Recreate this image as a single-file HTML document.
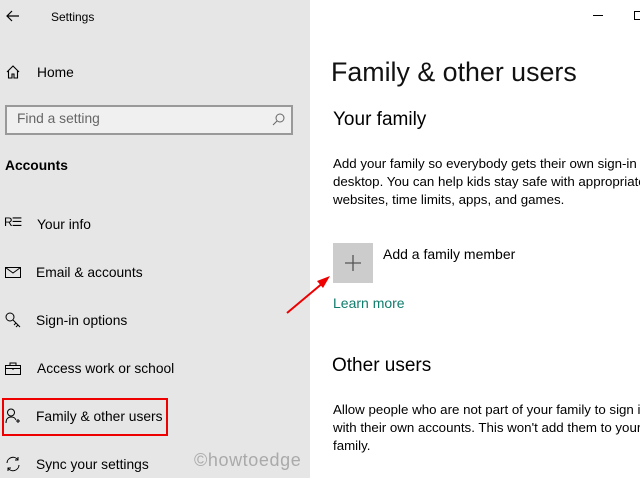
<!DOCTYPE html>
<html><head><meta charset="utf-8"><style>
*{margin:0;padding:0;box-sizing:border-box}
body{width:640px;height:478px;overflow:hidden;font-family:"Liberation Sans",sans-serif;background:#fff;position:relative;color:#000}
.side{position:absolute;left:0;top:0;width:310px;height:478px;background:#e6e6e6}
.t{position:absolute;white-space:nowrap}
.s{font-size:14px}
.side .s{font-size:13.8px}
svg{position:absolute}
</style></head><body>
<div class="side">
<svg style="left:6px;top:10px" width="14" height="12" viewBox="0 0 14 12"><path d="M13 6H1M6 1L1 6l5 5" fill="none" stroke="#000" stroke-width="1.2"/></svg>
<div class="t" style="left:51px;top:10px;font-size:12px">Settings</div>
<svg style="left:6px;top:65px" width="14" height="14" viewBox="0 0 14 14"><path d="M1 7L7 1l6 6M2.5 6v7h3.5V9h2v4h3.5V6" fill="none" stroke="#000" stroke-width="1.1"/></svg>
<div class="t s" style="left:37px;top:65px">Home</div>
<div style="position:absolute;left:5px;top:105px;width:288px;height:30px;border:2px solid #999;background:#f0f0f0"></div>
<div class="t s" style="left:17px;top:111px;color:#666">Find a setting</div>
<svg style="left:272px;top:113px" width="13" height="13" viewBox="0 0 13 13"><circle cx="8" cy="5" r="4" fill="none" stroke="#666"/><path d="M5 8L1 12" stroke="#666"/></svg>
<div class="t s" style="left:5px;top:158px;font-weight:bold">Accounts</div>
<div class="t s" style="left:37px;top:217px">Your info</div>
<div class="t" style="left:4px;top:215px;font-size:12px;letter-spacing:-1px">R☰</div>
<div class="t s" style="left:36px;top:265px">Email &amp; accounts</div>
<svg style="left:5px;top:267px" width="16" height="11" viewBox="0 0 16 11"><rect x=".5" y=".5" width="15" height="10" fill="none" stroke="#000"/><path d="M.5 .5L8 6l7.5-5.5" fill="none" stroke="#000"/></svg>
<div class="t s" style="left:36px;top:313px">Sign-in options</div>
<svg style="left:5px;top:312px" width="16" height="16" viewBox="0 0 16 16"><circle cx="5" cy="5" r="4" fill="none" stroke="#000"/><path d="M8 8l7 7M11 11l-2 2M13 13l-2 2" fill="none" stroke="#000"/></svg>
<div class="t s" style="left:37px;top:361px">Access work or school</div>
<svg style="left:5px;top:362px" width="16" height="13" viewBox="0 0 16 13"><rect x=".5" y="3.5" width="15" height="9" fill="none" stroke="#000"/><path d="M5 3.5V1h6v2.5M.5 6.5h15M7 7h2" fill="none" stroke="#000"/></svg>
<div style="position:absolute;left:2px;top:398px;width:166px;height:38px;border:2px solid #e00"></div>
<svg style="left:5px;top:408px" width="16" height="16" viewBox="0 0 16 16"><circle cx="6" cy="4.5" r="3.5" fill="none" stroke="#000"/><path d="M1 15c0-4 2-6 5-6s4 1 5 3M11 13h4M13 11v4" fill="none" stroke="#000"/></svg>
<div class="t s" style="left:36px;top:409px">Family &amp; other users</div>
<svg style="left:5px;top:456px" width="16" height="16" viewBox="0 0 16 16"><path d="M2 7a6 6 0 0 1 11-3M14 9a6 6 0 0 1-11 3M13 1v3h-3M3 15v-3h3" fill="none" stroke="#000"/></svg>
<div class="t s" style="left:36px;top:457px">Sync your settings</div>
<div class="t" style="left:194px;top:450px;font-size:18px;color:#aaa;letter-spacing:0.6px">©howtoedge</div>
</div>
<div style="position:absolute;left:593px;top:15px;width:10px;height:1px;background:#000"></div>
<div style="position:absolute;left:634px;top:11px;width:8px;height:9px;border:1px solid #000"></div>
<div class="t" style="left:331px;top:57px;font-size:26.8px;color:#111">Family &amp; other users</div>
<div class="t" style="left:333px;top:109px;font-size:19px">Your family</div>
<div class="t" style="left:333px;top:155px;font-size:13.3px;line-height:18px">Add your family so everybody gets their own sign-in and<br>desktop. You can help kids stay safe with appropriate<br>websites, time limits, apps, and games.</div>
<div style="position:absolute;left:333px;top:243px;width:40px;height:40px;background:#cccccc"></div>
<svg style="left:343px;top:253px" width="20" height="20" viewBox="0 0 20 20"><path d="M10 2v16M2 10h16" stroke="#555" stroke-width="1.3"/></svg>
<div class="t s" style="left:383px;top:246px">Add a family member</div>
<div class="t s" style="left:333px;top:295px;color:#107c6c">Learn more</div>
<svg style="left:284px;top:272px" width="50" height="45" viewBox="0 0 50 45"><path d="M3 41L40 10" stroke="#e00" stroke-width="2"/><path d="M46 4L33 9l6 7z" fill="#e00"/></svg>
<div class="t" style="left:332px;top:355px;font-size:19px">Other users</div>
<div class="t" style="left:333px;top:401px;font-size:13.3px;line-height:18px">Allow people who are not part of your family to sign in<br>with their own accounts. This won't add them to your<br>family.</div>
</body></html>
